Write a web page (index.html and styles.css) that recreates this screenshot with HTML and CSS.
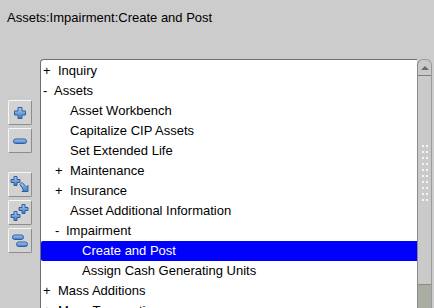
FILE: index.html
```html
<!DOCTYPE html>
<html lang="en">

<head>
    <meta charset="UTF-8">
    <link rel="stylesheet" href="styles.css">
    <title>Navigator</title>
</head>

<body>
    <div class="title">Assets:Impairment:Create and Post</div>
    <div class="main">
        <div class="tools">
            <div class="group">
                <button class="btn" title="Expand">
                    <svg width="22" height="22" viewBox="0 0 22 22">
                        <defs>
                            <linearGradient id="blue" x1="0" y1="0" x2="0" y2="1">
                                <stop offset="0" stop-color="#a9cdf3" />
                                <stop offset="1" stop-color="#3f78c4" />
                            </linearGradient>
                        </defs>
                        <path class="ico" d="M9 5.5h4v3.5h3.5v4h-3.5v3.5h-4v-3.5h-3.5v-4h3.5z" />
                    </svg>
                </button>
                <button class="btn" title="Collapse">
                    <svg width="22" height="22" viewBox="0 0 22 22">
                        <rect class="ico" x="4.5" y="9" width="13" height="4.5" rx="2.2" />
                    </svg>
                </button>
            </div>
            <div class="group">
                <button class="btn" title="Expand Branch">
                    <svg width="22" height="22" viewBox="0 0 22 22">
                        <path class="ico" d="M5 2.5h3v3h3v3h-3v3h-3v-3h-3v-3h3z" />
                        <path class="ico" d="M11 10.5l2-2 4.5 4.5 1.5-1.5v6h-6l1.5-1.5z" />
                    </svg>
                </button>
                <button class="btn" title="Expand All">
                    <svg width="22" height="22" viewBox="0 0 22 22">
                        <path class="ico" d="M13 2.5h3v3h3v3h-3v3h-3v-3h-3v-3h3z" />
                        <path class="ico" d="M5 9.5h3v3h3v3h-3v3h-3v-3h-3v-3h3z" />
                    </svg>
                </button>
                <button class="btn" title="Collapse All">
                    <svg width="22" height="22" viewBox="0 0 22 22">
                        <rect class="ico" x="3.5" y="5" width="11" height="4.5" rx="2.2" />
                        <rect class="ico" x="7.5" y="12" width="11" height="4.5" rx="2.2" />
                    </svg>
                </button>
            </div>
        </div>
        <div class="tree">
            <div class="row l0"><span class="mark">+</span>Inquiry</div>
            <div class="row l0"><span class="mark minus">-</span>Assets</div>
            <div class="row l1"><span class="mark"></span>Asset Workbench</div>
            <div class="row l1"><span class="mark"></span>Capitalize CIP Assets</div>
            <div class="row l1"><span class="mark"></span>Set Extended Life</div>
            <div class="row l1"><span class="mark">+</span>Maintenance</div>
            <div class="row l1"><span class="mark">+</span>Insurance</div>
            <div class="row l1"><span class="mark"></span>Asset Additional Information</div>
            <div class="row l1"><span class="mark minus">-</span>Impairment</div>
            <div class="row l2 selected"><span class="mark"></span>Create and Post</div>
            <div class="row l2"><span class="mark"></span>Assign Cash Generating Units</div>
            <div class="row l0"><span class="mark">+</span>Mass Additions</div>
            <div class="row l0"><span class="mark">+</span>Mass Transactions</div>
        </div>
        <div class="scrollbar">
            <div class="arrow"></div>
            <div class="thumb">
                <div class="grip"></div>
            </div>
            <div class="track"></div>
        </div>
    </div>
</body>

</html>
```

FILE: styles.css
```css
* {
    padding: 0;
    margin: 0;
    box-sizing: border-box;
}

body {
    width: 434px;
    height: 308px;
    overflow: hidden;
    background-color: #cccccc;
    font-family: "Liberation Sans", Arial, sans-serif;
    font-size: 13px;
    color: #000;
}

.title {
    height: 59px;
    padding: 10px 0 0 7px;
    line-height: 15px;
}

.main {
    display: flex;
    height: 249px;
}

.tools {
    width: 40px;
    padding: 41px 0 0 8px;
    display: flex;
    flex-direction: column;
    gap: 19px;
}

.group {
    display: flex;
    flex-direction: column;
    gap: 3px;
}

.btn {
    width: 24px;
    height: 25px;
    display: flex;
    align-items: center;
    justify-content: center;
    background-color: #d2d2d2;
    border: 1px solid;
    border-color: #f6f6f6 #8c8c8c #8c8c8c #f6f6f6;
    border-radius: 2px;
}

.ico {
    fill: url(#blue);
    stroke: #2d5e9f;
    stroke-width: 1;
}

.tree {
    flex: 1;
    background-color: #fff;
    border-top: 1px solid #6e6e6e;
    border-left: 1px solid #6e6e6e;
    border-top-left-radius: 4px;
    padding-top: 1px;
    overflow: hidden;
}

.row {
    display: flex;
    height: 20px;
    line-height: 20px;
    white-space: nowrap;
}

.l0 {
    padding-left: 2px;
}

.l1 {
    padding-left: 14px;
}

.l2 {
    padding-left: 26px;
}

.mark {
    width: 15px;
    flex: none;
}

.mark.minus {
    width: 11px;
}

.selected {
    background-color: #0000ff;
    color: #fff;
    border-radius: 2px 0 0 2px;
}

.scrollbar {
    width: 15px;
    margin-right: 2px;
    display: flex;
    flex-direction: column;
    border-left: 1px solid #8a8a8a;
    border-right: 1px solid #9a9a9a;
    border-top: 1px solid #9a9a9a;
    border-radius: 6px 6px 0 0;
    background-color: #c9c9c9;
}

.arrow {
    height: 16px;
    border-bottom: 1px solid #7d7d7d;
    position: relative;
}

.arrow::after {
    content: "";
    position: absolute;
    left: 3px;
    top: 6px;
    border-left: 4px solid transparent;
    border-right: 4px solid transparent;
    border-bottom: 4px solid #6a6a6a;
}

.thumb {
    height: 209px;
    border-bottom: 1px solid #8a8a8a;
    background-color: #cacaca;
    display: flex;
    justify-content: center;
    padding-top: 67px;
}

.grip {
    width: 7px;
    height: 60px;
    background-image: radial-gradient(circle, #f4f4f4 0.8px, transparent 1.2px);
    background-size: 4px 6px;
}

.track {
    flex: 1;
    background-color: #a9ada2;
}
```
